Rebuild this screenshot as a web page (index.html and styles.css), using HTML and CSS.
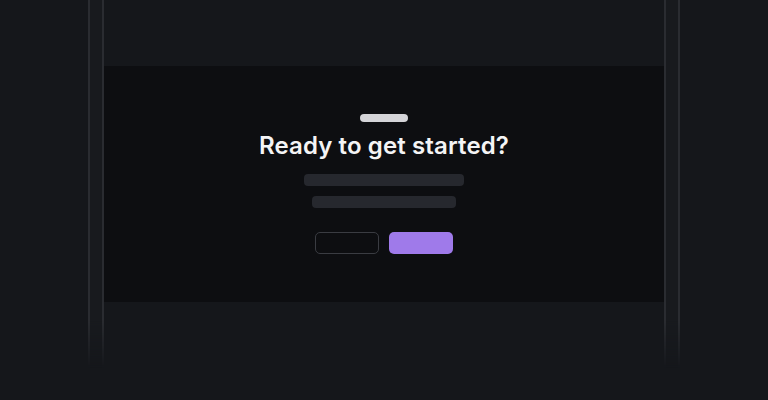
FILE: index.html
```html
<!DOCTYPE html>
<html lang="en">
<head>
<meta charset="utf-8">
<title>Ready to get started?</title>
<link rel="stylesheet" href="styles.css">
</head>
<body>
<div class="frame">
  <div class="rail"></div>
  <main class="main">
    <section class="cta">
      <div class="pill"></div>
      <h1 class="title">Ready to get started?</h1>
      <div class="bar bar-wide"></div>
      <div class="bar bar-narrow"></div>
      <div class="actions">
        <button class="btn btn-outline" type="button" aria-label="Secondary"></button>
        <button class="btn btn-primary" type="button" aria-label="Primary"></button>
      </div>
    </section>
  </main>
  <div class="rail"></div>
</div>
</body>
</html>
```

FILE: styles.css
```css
* { box-sizing: border-box; }
html, body { margin: 0; padding: 0; }
body {
  width: 768px;
  height: 400px;
  overflow: hidden;
  background: #15171b;
  font-family: Inter, "Noto Sans", "Liberation Sans", sans-serif;
}
.frame {
  display: flex;
  justify-content: center;
  height: 400px;
}
.rail {
  width: 16px;
  height: 100%;
  background: #181a1e;
  border-left: 2px solid #2a2c31;
  border-right: 2px solid #2a2c31;
  -webkit-mask-image: linear-gradient(to bottom, #000 0, #000 320px, transparent 368px);
  mask-image: linear-gradient(to bottom, #000 0, #000 320px, transparent 368px);
}
.main {
  width: 560px;
  padding-top: 66px;
}
.cta {
  height: 236px;
  background: #0d0e11;
  display: flex;
  flex-direction: column;
  align-items: center;
  padding-top: 48px;
}
.pill {
  width: 48px;
  height: 8px;
  border-radius: 4px;
  background: #d4d4d8;
}
.title {
  margin: 8px 0 0;
  font-size: 24px;
  line-height: 32px;
  font-weight: 600;
  color: #f4f4f5;
  letter-spacing: 0.12px;
}
.bar {
  height: 12px;
  border-radius: 4px;
  background: #26282e;
}
.bar-wide { width: 160px; margin-top: 12px; }
.bar-narrow { width: 144px; margin-top: 10px; }
.actions {
  display: flex;
  gap: 10px;
  margin-top: 24px;
}
.btn {
  width: 64px;
  height: 22px;
  border-radius: 5px;
  padding: 0;
  margin: 0;
}
.btn-outline {
  background: transparent;
  border: 1px solid #3a3c42;
}
.btn-primary {
  background: #9f7aea;
  border: none;
}
```
